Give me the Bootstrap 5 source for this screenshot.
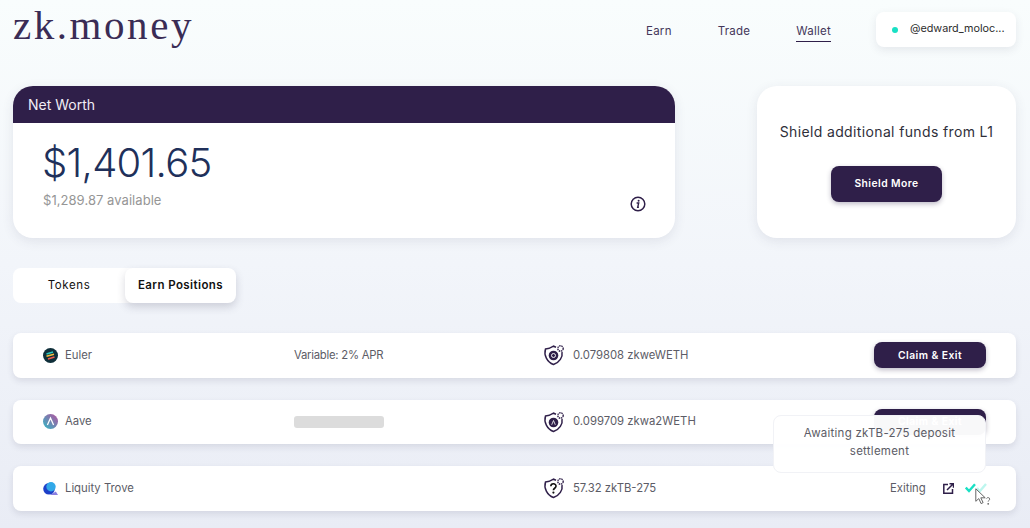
<!DOCTYPE html>
<html lang="en">
<head>
<meta charset="utf-8">
<title>zk.money</title>
<link href="https://cdn.jsdelivr.net/npm/bootstrap@5.3.0/dist/css/bootstrap.min.css" rel="stylesheet">
<style>
html,body{height:528px;overflow:hidden}
body{font-family:Inter,"Liberation Sans",sans-serif;background:linear-gradient(180deg,#f9fdfd 0%,#f2f5fa 50%,#e9ecf5 100%);color:#2f1f49;padding:0 14px 0 13px}
.top-bar{height:86px}
.brand{font-family:"Liberation Serif",serif;font-size:41px;letter-spacing:2.55px;line-height:1;color:#3a2c55;height:86px;padding-top:5px}
.nav-zone{gap:46px;font-size:11.5px;letter-spacing:.25px;margin-top:-21px;margin-right:45px}
.nav-item-x{color:#44375a;padding-bottom:2px;border-bottom:1px solid transparent;line-height:16px}
.nav-item-x.current{border-bottom-color:#2f1f49}
.user-pill{width:140px;height:35px;background:#fff;border-radius:8px;box-shadow:0 3px 8px rgba(60,60,90,.1);font-size:10.8px;color:#2c2c2c;padding:0 5px 0 16px;gap:12px;margin-top:-27px}
.status-dot{width:6px;height:6px;border-radius:50%;background:#19e0c4;flex:none}
.hero-grid{gap:82px}
.worth-card{width:662px;height:152px;background:#fff;border-radius:20px;box-shadow:0 3px 12px rgba(60,60,90,.1);overflow:hidden}
.worth-head{height:37px;background:#2f1f49;color:#f1edf5;font-size:14px;padding:0 15px}
.worth-body{padding:11px 29px 0 30px;height:115px}
.worth-value{font-size:40px;line-height:58px;color:#20305a;letter-spacing:-.72px;font-weight:300;margin-left:-1px}
.worth-sub{font-size:13px;color:#969696;line-height:16px;letter-spacing:.05px}
.shield-card{width:259px;height:152px;background:#fff;border-radius:20px;box-shadow:0 3px 12px rgba(60,60,90,.1);padding-top:37px;gap:25px}
.shield-text{font-size:14px;letter-spacing:.36px;color:#2f2f3a;line-height:18px}
.dark-btn{background:#2f1f49;color:#fff;border:0;border-radius:8px;font-size:10.3px;font-weight:600;letter-spacing:.45px;box-shadow:0 2px 5px rgba(40,30,70,.3);padding:0}
.shield-btn{width:111px;height:36px}
.claim-btn{width:112px;height:26px}
.tab-strip{width:223px;height:35px;background:#fff;border-radius:8px;margin:30px 0;font-size:11.5px;letter-spacing:.42px;color:#111;line-height:14px}
.tab-one{width:112px;padding:0 0 2px 0;letter-spacing:.6px}
.tab-two{width:111px;font-weight:600;border-radius:8px;box-shadow:0 4px 9px rgba(60,60,90,.2);padding-bottom:2px}
.pos-list{gap:22px}
.pos-row{height:44.5px;background:#fff;border-radius:8px;box-shadow:0 3px 6px rgba(60,60,90,.12);font-size:11.3px;color:#5c5c66;position:relative;padding-left:30px}
.pos-name{width:251px;gap:7px}
.pos-rate{width:249px;font-size:11.3px;letter-spacing:-.25px}
.pos-amt{width:331px;gap:8px;font-size:11.3px}
.skeleton{width:90px;height:12px;background:#dcdcdc;border-radius:3px}
.hint-box{position:absolute;left:760px;top:-51px;width:213px;height:58px;background:rgba(255,255,255,.97);border-radius:8px;border:1px solid #f1f2f6;font-size:11.5px;line-height:18px;letter-spacing:.25px;color:#5c5c66;text-align:center;padding:8px 25px;z-index:3}
.pointer-mark{position:absolute;left:962px;top:22px;z-index:4}
.exit-text{margin-left:16px;margin-right:17px}
.check-glyph{margin-left:11px}
</style>
</head>
<body>
<header class="top-bar d-flex align-items-center justify-content-between">
  <div class="brand">zk.money</div>
  <div class="d-flex align-items-center">
    <nav class="nav-zone d-flex">
      <span class="nav-item-x">Earn</span>
      <span class="nav-item-x">Trade</span>
      <span class="nav-item-x current">Wallet</span>
    </nav>
    <div class="user-pill d-flex align-items-center"><span class="status-dot"></span><span>@edward_moloc...</span></div>
  </div>
</header>

<section class="hero-grid d-flex">
  <div class="worth-card">
    <div class="worth-head d-flex align-items-center">Net Worth</div>
    <div class="worth-body d-flex justify-content-between">
      <div>
        <div class="worth-value">$1,401.65</div>
        <div class="worth-sub">$1,289.87 available</div>
      </div>
      <svg class="align-self-start" style="margin-top:62px" width="16" height="16" viewBox="0 0 16 16"><circle cx="8" cy="8" r="6.8" fill="none" stroke="#2f1f49" stroke-width="1.5"/><circle cx="8.6" cy="4.7" r="1" fill="#2f1f49"/><path d="M6.6 7h2.1l-1 4.3h1.2" fill="none" stroke="#2f1f49" stroke-width="1.4"/></svg>
    </div>
  </div>
  <div class="shield-card d-flex flex-column align-items-center">
    <div class="shield-text">Shield additional funds from L1</div>
    <button class="dark-btn shield-btn">Shield More</button>
  </div>
</section>

<div class="tab-strip d-flex">
  <div class="tab-one d-flex align-items-center justify-content-center">Tokens</div>
  <div class="tab-two d-flex align-items-center justify-content-center">Earn Positions</div>
</div>

<section class="pos-list d-flex flex-column">
  <div class="pos-row d-flex align-items-center">
    <div class="pos-name d-flex align-items-center">
      <svg width="15" height="15" viewBox="0 0 15 15"><circle cx="7.500" cy="7.500" r="7.500" fill="#0f2f3a"/><path d="M3.500 6 10 4" stroke="#2bc6c0" stroke-width="1.500"/><path d="M3.500 8.300 11 6.300" stroke="#f3c13c" stroke-width="1.500"/><path d="M5 11 11.500 9" stroke="#ef5a4c" stroke-width="1.500"/></svg>
      <span>Euler</span>
    </div>
    <div class="pos-rate">Variable: 2% APR</div>
    <div class="pos-amt d-flex align-items-center">
      <svg width="22" height="22" viewBox="0 0 22 22"><path d="M13 3.300 10.500 2.200C8.500 3.500 5.500 4.800 2.500 5 .6 11 4 18 10.500 20.500 16.500 18.500 20 13 19 8" fill="none" stroke="#2f1f49" stroke-width="1.500"/><circle cx="10.500" cy="11.500" r="4.800" fill="#2f1f49"/><circle cx="10.500" cy="11.500" r="2" fill="none" stroke="#fff" stroke-width=".9"/><circle cx="17.500" cy="4.500" r="2.700" fill="none" stroke="#2f1f49" stroke-width="1.400" stroke-dasharray="1.500 .7"/></svg>
      <span>0.079808 zkweWETH</span>
    </div>
    <button class="dark-btn claim-btn">Claim &amp; Exit</button>
  </div>
  <div class="pos-row d-flex align-items-center">
    <div class="pos-name d-flex align-items-center">
      <svg width="15" height="15" viewBox="0 0 15 15"><defs><linearGradient id="aaveh" x1="0" y1="1" x2="1" y2="0"><stop offset="0" stop-color="#2ebac6"/><stop offset="1" stop-color="#b6509e"/></linearGradient></defs><circle cx="7.500" cy="7.500" r="7.500" fill="url(#aaveh)"/><path d="M4.400 11 7.500 4l3.100 7" fill="none" stroke="#fff" stroke-width="1.300"/></svg>
      <span>Aave</span>
    </div>
    <div class="pos-rate"><div class="skeleton"></div></div>
    <div class="pos-amt d-flex align-items-center">
      <svg width="22" height="22" viewBox="0 0 22 22"><path d="M13 3.300 10.500 2.200C8.500 3.500 5.500 4.800 2.500 5 .6 11 4 18 10.500 20.500 16.500 18.500 20 13 19 8" fill="none" stroke="#2f1f49" stroke-width="1.500"/><circle cx="10.500" cy="11.500" r="4.800" fill="#2f1f49"/><path d="M8.700 13.800 10.500 9.500l1.800 4.300" fill="none" stroke="#fff" stroke-width=".8"/><circle cx="17.500" cy="4.500" r="2.700" fill="none" stroke="#2f1f49" stroke-width="1.400" stroke-dasharray="1.500 .7"/></svg>
      <span>0.099709 zkwa2WETH</span>
    </div>
    <button class="dark-btn claim-btn">Claim &amp; Exit</button>
  </div>
  <div class="pos-row d-flex align-items-center">
    <div class="hint-box">Awaiting zkTB-275 deposit settlement</div>
    <div class="pos-name d-flex align-items-center">
      <svg width="15" height="15" viewBox="0 0 15 15"><path d="M7 14H15L12.800 10.500z" fill="#8a7fe0"/><circle cx="6" cy="7.800" r="5.800" fill="#1d3fc8"/><circle cx="8" cy="5.700" r="4.700" fill="#31a8e8"/></svg>
      <span>Liquity Trove</span>
    </div>
    <div class="pos-rate"></div>
    <div class="pos-amt d-flex align-items-center">
      <svg width="22" height="22" viewBox="0 0 22 22"><path d="M13 3.300 10.500 2.200C8.500 3.500 5.500 4.800 2.500 5 .6 11 4 18 10.500 20.500 16.500 18.500 20 13 19 8" fill="none" stroke="#2f1f49" stroke-width="1.500"/><path d="M7.800 9.300c.2-3.400 5.400-3.200 5.200 0 0 1.900-2.600 2-2.600 3.900" fill="none" stroke="#111" stroke-width="1.600"/><circle cx="10.400" cy="15.600" r="1.100" fill="#111"/><circle cx="17.500" cy="4.500" r="2.700" fill="none" stroke="#2f1f49" stroke-width="1.400" stroke-dasharray="1.500 .7"/></svg>
      <span>57.32 zkTB-275</span>
    </div>
    <span class="exit-text">Exiting</span>
    <svg width="11" height="11" viewBox="0 0 11 11"><path d="M5 1.500H.8v8.700h8.700V6" fill="none" stroke="#2f1f49" stroke-width="1.500"/><path d="M4 7 10 1M6.500.8h4v4" fill="none" stroke="#2f1f49" stroke-width="1.500"/></svg>
    <svg class="check-glyph" width="22" height="10" viewBox="0 0 22 10"><path d="M12 5l2.500 3.500 6.500-7.500" fill="none" stroke="#bdf6ee" stroke-width="2.400"/><path d="M.8 4.500l3.200 3.500 6-6.800" fill="none" stroke="#19e0c4" stroke-width="2.400"/></svg>
    <svg class="pointer-mark" width="17" height="18" viewBox="0 0 17 18"><path d="M.8.8v12.500l3-2.700 2.300 5 2-1-2.300-4.800h4.400z" fill="#fff" stroke="#666" stroke-width="1"/><path d="M11.500 10.500c.8-1.500 3.400-1 3.200.7-.1 1.100-1.500 1.100-1.500 2.400" fill="none" stroke="#666" stroke-width="1"/><circle cx="13.200" cy="15.800" r=".9" fill="#666"/></svg>
  </div>
</section>
<script src="https://cdn.jsdelivr.net/npm/bootstrap@5.3.0/dist/js/bootstrap.bundle.min.js"></script>
</body>
</html>
